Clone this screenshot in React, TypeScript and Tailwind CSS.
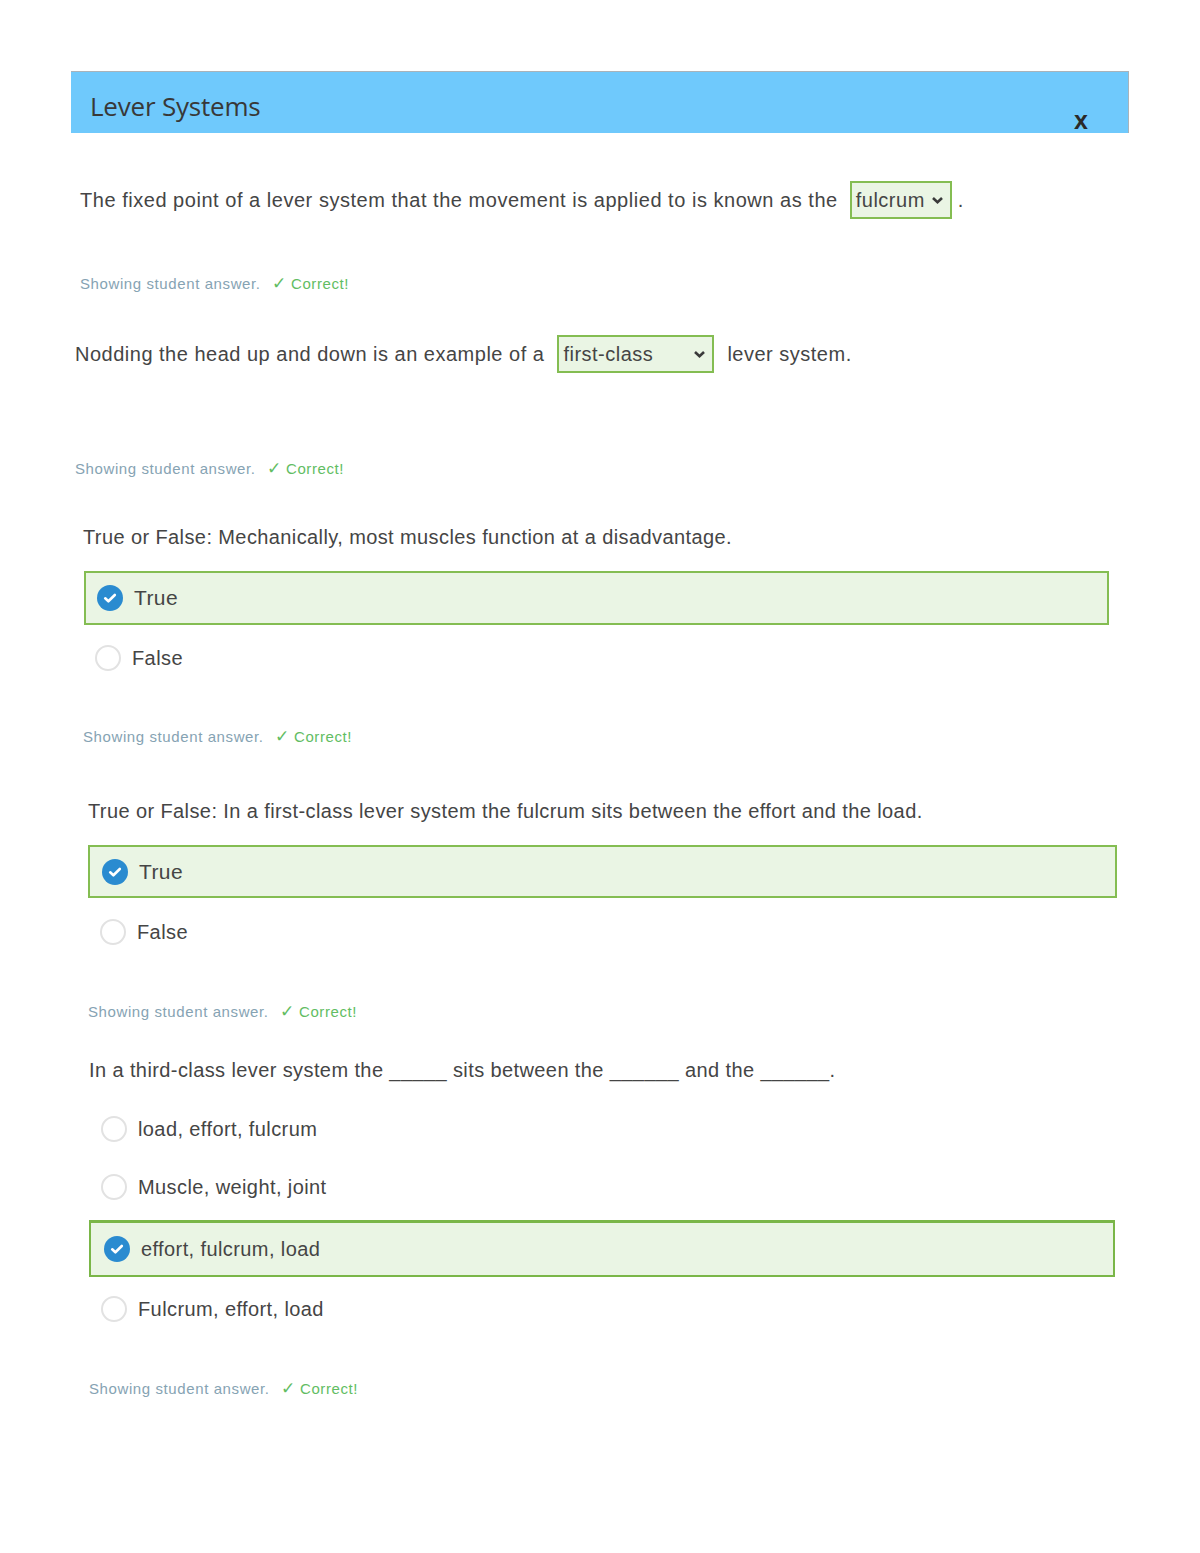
import React from "react";

const Status = ({ pl, mt }: { pl: string; mt: string }) => (
  <div className={`flex h-[20px] items-center text-[15px] tracking-[0.6px] ${pl} ${mt}`}>
    <span className="text-[#86a3b3]">Showing student answer.</span>
    <span className="ml-[11px] text-[#62bd63]">
      <span className="text-[17px] font-['DejaVu_Sans',sans-serif] font-light">✓</span> Correct!
    </span>
  </div>
);

const Checked = () => (
  <svg width="26" height="26" viewBox="0 0 26 26">
    <circle cx="13" cy="13" r="13" fill="#2a8bd0" />
    <path d="M8.2 13.3l3.2 3 6.4-6.3" fill="none" stroke="#fff" strokeWidth="2.6" strokeLinecap="round" strokeLinejoin="round" />
  </svg>
);

const Empty = () => (
  <div className="h-[26px] w-[26px] rounded-full border-2 border-[#e2e2e2] bg-white" />
);

const Chevron = () => (
  <svg width="13" height="10" viewBox="0 0 13 10">
    <path d="M2 3l4.5 4.2L11 3" fill="none" stroke="#3a3a3a" strokeWidth="2.6" />
  </svg>
);

const Option = ({ text, mt, pl }: { text: string; mt: string; pl: string }) => (
  <div className={`flex h-[40px] items-center gap-[11px] text-[20px] tracking-[0.4px] ${pl} ${mt}`}>
    <Empty />
    <span>{text}</span>
  </div>
);

export default function App() {
  return (
    <div className="min-h-[1553px] bg-white pt-[71px] font-['Liberation_Sans',Arial,sans-serif] text-[#454545]">
      <div className="mx-[71px] flex h-[62px] justify-between border-t border-r border-[#a9b3ba] bg-[#6fc9fc] pl-[19px] pr-[40px]">
        <div className="pt-[15px] font-['Open_Sans',sans-serif] text-[26px] tracking-[-0.2px] text-[#383838]">Lever Systems</div>
        <div className="pt-[30px] text-[25px] font-bold text-[#2a2a2a]">x</div>
      </div>

      {/* question 1 */}
      <div className="mt-[48px] flex h-[38px] items-center pl-[80px] text-[20px] tracking-[0.53px]">
        <span>The fixed point of a lever system that the movement is applied to is known as the</span>
        <div className="ml-[12px] flex h-[38px] w-[102px] items-center justify-between border-2 border-[#84bd52] bg-[#eaf5e4] pl-[4px] pr-[6px] tracking-[0.5px]">
          <span>fulcrum</span>
          <Chevron />
        </div>
        <span className="ml-[6px]">.</span>
      </div>
      <Status pl="pl-[80px]" mt="mt-[55px]" />

      {/* question 2 */}
      <div className="mt-[41px] flex h-[38px] items-center pl-[75px] text-[20px] tracking-[0.5px]">
        <span>Nodding the head up and down is an example of a</span>
        <div className="ml-[13px] flex h-[38px] w-[157px] items-center justify-between border-2 border-[#84bd52] bg-[#eaf5e4] pl-[4px] pr-[6px]">
          <span>first-class</span>
          <Chevron />
        </div>
        <span className="ml-[13px]">lever system.</span>
      </div>
      <Status pl="pl-[75px]" mt="mt-[86px]" />

      {/* question 3 */}
      <div className="mt-[46px] flex h-[24px] items-center pl-[83px] text-[20px] tracking-[0.4px]">
        True or False: Mechanically, most muscles function at a disadvantage.
      </div>
      <div className="ml-[84px] mr-[91px] mt-[22px] flex h-[54px] items-center gap-[11px] border-2 border-[#84bd52] bg-[#eaf5e4] pl-[11px] text-[21px] tracking-[0.4px]">
        <Checked />
        <span>True</span>
      </div>
      <Option text="False" pl="pl-[95px]" mt="mt-[13px]" />
      <Status pl="pl-[83px]" mt="mt-[49px]" />

      {/* question 4 */}
      <div className="mt-[52px] flex h-[24px] items-center pl-[88px] text-[20px] tracking-[0.4px]">
        True or False: In a first-class lever system the fulcrum sits between the effort and the load.
      </div>
      <div className="ml-[88px] mr-[83px] mt-[22px] flex h-[53px] items-center gap-[11px] border-2 border-[#84bd52] bg-[#eaf5e4] pl-[12px] text-[21px] tracking-[0.4px]">
        <Checked />
        <span>True</span>
      </div>
      <Option text="False" pl="pl-[100px]" mt="mt-[14px]" />
      <Status pl="pl-[88px]" mt="mt-[50px]" />

      {/* question 5 */}
      <div className="mt-[36px] flex h-[24px] items-center pl-[89px] text-[20px] tracking-[0.4px]">
        In a third-class lever system the _____ sits between the ______ and the ______.
      </div>
      <Option text="load, effort, fulcrum" pl="pl-[101px]" mt="mt-[27px]" />
      <Option text="Muscle, weight, joint" pl="pl-[101px]" mt="mt-[18px]" />
      <div className="ml-[89px] mr-[85px] mt-[13px] flex h-[57px] items-center gap-[11px] border-2 border-t-[3px] border-[#7ab648] bg-[#eaf5e4] pl-[13px] text-[20px] tracking-[0.4px]">
        <Checked />
        <span>effort, fulcrum, load</span>
      </div>
      <Option text="Fulcrum, effort, load" pl="pl-[101px]" mt="mt-[12px]" />
      <Status pl="pl-[89px]" mt="mt-[50px]" />
    </div>
  );
}
